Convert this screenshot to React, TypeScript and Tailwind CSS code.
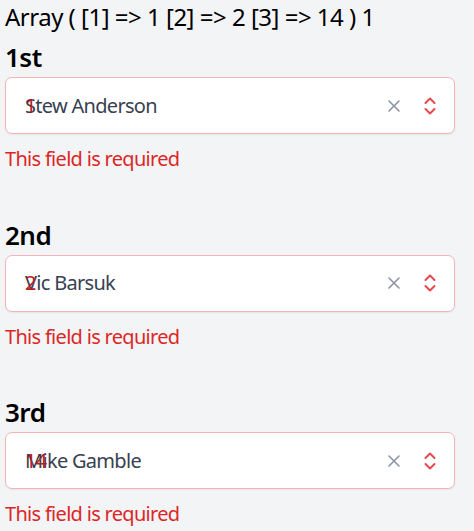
import { useState } from "react"

type Pick = { label: string; title: string; typed: string }

const picks: Pick[] = [
  { label: "1st", title: "Stew Anderson", typed: "1" },
  { label: "2nd", title: "Vic Barsuk", typed: "2" },
  { label: "3rd", title: "Mike Gamble", typed: "14" },
]

function ClearIcon() {
  return (
    <svg viewBox="0 0 14 14" className="h-[14px] w-[14px]" fill="none" stroke="#8b93a6" strokeWidth="1.6" strokeLinecap="round">
      <path d="M2 2l10 10M12 2L2 12" />
    </svg>
  )
}

function UpDownIcon() {
  return (
    <svg viewBox="0 0 14 20" className="h-[20px] w-[14px]" fill="none" stroke="#e5484d" strokeWidth="2" strokeLinecap="round" strokeLinejoin="round">
      <path d="M2.5 7l4.5-4.5L11.5 7" />
      <path d="M2.5 13l4.5 4.5 4.5-4.5" />
    </svg>
  )
}

function PlayerSelect({ pick }: { pick: Pick }) {
  const [typed] = useState(pick.typed)
  return (
    <div className="mt-[2px] flex h-[57px] items-center rounded-[7px] border border-[#f4b4b6] bg-white pl-[19px] pr-[12px] shadow-[0_1px_2px_rgba(0,0,0,0.06)]">
      <div className="relative flex-1 text-[20px] leading-[28px] tracking-[-0.7px] text-[#374151]">
        {pick.title}
        <span className="absolute left-0 top-0 text-[#b91c1c]">{typed}</span>
      </div>
      <button className="flex h-[24px] w-[24px] items-center justify-center">
        <ClearIcon />
      </button>
      <button className="ml-[12px] flex h-[24px] w-[24px] items-center justify-center">
        <UpDownIcon />
      </button>
    </div>
  )
}

export default function App() {
  return (
    <div className="min-h-screen bg-[#f3f4f6] pl-[5px] pr-[19px] font-['Noto_Sans',sans-serif] text-black">
      <p className="pt-[1px] text-[24px] leading-[32px] tracking-[-0.5px]">Array ( [1] =&gt; 1 [2] =&gt; 2 [3] =&gt; 14 ) 1</p>

      <div className="mt-[6px] flex flex-col gap-[43.5px]">
        {picks.map((pick) => (
          <div key={pick.label}>
            <h2 className="text-[26px] font-semibold leading-[36px] tracking-[-0.5px]">{pick.label}</h2>
            <PlayerSelect pick={pick} />
            <p className="mt-[11px] text-[20px] leading-[28px] tracking-[-0.7px] text-[#dc2626]">This field is required</p>
          </div>
        ))}
      </div>
    </div>
  )
}
